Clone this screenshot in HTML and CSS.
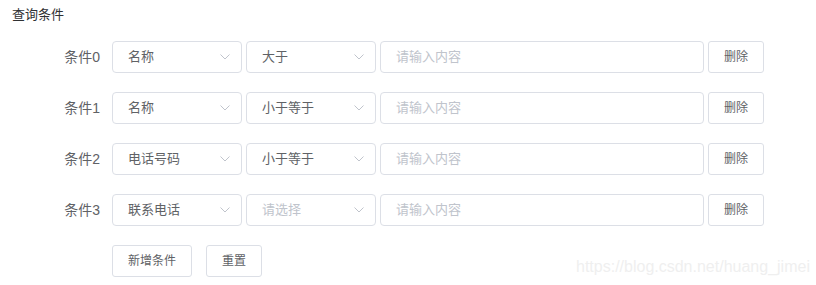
FILE: index.html
```html
<!DOCTYPE html>
<html lang="zh">
<head>
<meta charset="utf-8">
<title>查询条件</title>
<link rel="stylesheet" href="styles.css">
</head>
<body>
<div class="page">
  <div class="title">查询条件</div>
  <div class="rows">
    <div class="row">
      <label class="label">条件0</label>
      <div class="select"><span class="val">名称</span><svg class="arrow" viewBox="0 0 10 6" width="10" height="6"><polyline points="0.5,0.5 5,5 9.5,0.5"/></svg></div>
      <div class="select"><span class="val">大于</span><svg class="arrow" viewBox="0 0 10 6" width="10" height="6"><polyline points="0.5,0.5 5,5 9.5,0.5"/></svg></div>
      <div class="input"><span class="ph">请输入内容</span></div>
      <button class="btn">删除</button>
    </div>
    <div class="row">
      <label class="label">条件1</label>
      <div class="select"><span class="val">名称</span><svg class="arrow" viewBox="0 0 10 6" width="10" height="6"><polyline points="0.5,0.5 5,5 9.5,0.5"/></svg></div>
      <div class="select"><span class="val">小于等于</span><svg class="arrow" viewBox="0 0 10 6" width="10" height="6"><polyline points="0.5,0.5 5,5 9.5,0.5"/></svg></div>
      <div class="input"><span class="ph">请输入内容</span></div>
      <button class="btn">删除</button>
    </div>
    <div class="row">
      <label class="label">条件2</label>
      <div class="select"><span class="val">电话号码</span><svg class="arrow" viewBox="0 0 10 6" width="10" height="6"><polyline points="0.5,0.5 5,5 9.5,0.5"/></svg></div>
      <div class="select"><span class="val">小于等于</span><svg class="arrow" viewBox="0 0 10 6" width="10" height="6"><polyline points="0.5,0.5 5,5 9.5,0.5"/></svg></div>
      <div class="input"><span class="ph">请输入内容</span></div>
      <button class="btn">删除</button>
    </div>
    <div class="row">
      <label class="label">条件3</label>
      <div class="select"><span class="val">联系电话</span><svg class="arrow" viewBox="0 0 10 6" width="10" height="6"><polyline points="0.5,0.5 5,5 9.5,0.5"/></svg></div>
      <div class="select"><span class="ph">请选择</span><svg class="arrow" viewBox="0 0 10 6" width="10" height="6"><polyline points="0.5,0.5 5,5 9.5,0.5"/></svg></div>
      <div class="input"><span class="ph">请输入内容</span></div>
      <button class="btn">删除</button>
    </div>
    <div class="actions">
      <button class="btn">新增条件</button>
      <button class="btn">重置</button>
    </div>
  </div>
  <div class="watermark">https://blog.csdn.net/huang_jimei</div>
</div>
</body>
</html>
```
FILE: styles.css
```css
html, body {
  margin: 0;
  padding: 0;
  background: #ffffff;
}
.page {
  position: relative;
  width: 816px;
  height: 285px;
  box-sizing: border-box;
  padding: 5px 12px 0 12px;
  font-family: "Liberation Sans", "Noto Sans CJK SC", sans-serif;
}
.title {
  font-size: 13px;
  line-height: 20px;
  color: #303133;
}
.rows {
  margin-top: 16px;
  display: flex;
  flex-direction: column;
  gap: 19px;
}
.row {
  display: flex;
  align-items: center;
  gap: 4px;
  height: 32px;
}
.label {
  width: 96px;
  box-sizing: border-box;
  padding-right: 8px;
  text-align: right;
  font-size: 14px;
  line-height: 30px;
  color: #606266;
}
.select, .input {
  box-sizing: border-box;
  height: 32px;
  border: 1px solid #dcdfe6;
  border-radius: 4px;
  display: flex;
  align-items: center;
  padding-left: 15px;
  font-size: 13px;
  line-height: 28px;
  color: #606266;
  background: #fff;
}
.select {
  width: 130px;
  justify-content: space-between;
  padding-right: 11px;
}
.input {
  width: 324px;
}
.val { color: #606266; }
.ph { color: #c0c4cc; }
.arrow {
  fill: none;
  stroke: #c0c4cc;
  stroke-width: 1;
}
.btn {
  box-sizing: border-box;
  height: 32px;
  padding: 0 15px;
  border: 1px solid #dcdfe6;
  border-radius: 3px;
  background: #fff;
  color: #606266;
  font-size: 12px;
  font-family: "Liberation Sans", "Noto Sans CJK SC", sans-serif;
  line-height: 30px;
}
.actions {
  display: flex;
  gap: 14px;
  padding-left: 100px;
}
.watermark {
  position: absolute;
  left: 576px;
  top: 257px;
  font-size: 16px;
  line-height: 20px;
  color: #efefef;
  white-space: nowrap;
}
```
